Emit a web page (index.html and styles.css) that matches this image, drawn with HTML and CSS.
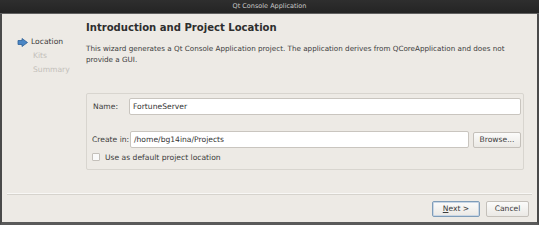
FILE: index.html
```html
<!DOCTYPE html>
<html>
<head>
<meta charset="utf-8">
<link rel="stylesheet" href="styles.css">
</head>
<body>
<div class="window">
  <div class="titlebar">Qt Console Application</div>
  <div class="client">
    <div class="main">
      <div class="sidebar">
        <div class="step current">
          <svg class="arrow" width="11" height="9" viewBox="0 0 11 9"><path d="M1 2.5 H5 V0.5 L10.5 4.5 L5 8.5 V6.5 H1 Z" fill="#4a86c5" stroke="#2d5f97" stroke-width="0.8" stroke-linejoin="round"/></svg>
          <span>Location</span>
        </div>
        <div class="step">Kits</div>
        <div class="step">Summary</div>
      </div>
      <div class="content">
        <h1 class="heading">Introduction and Project Location</h1>
        <p class="desc">This wizard generates a Qt Console Application project. The application derives from QCoreApplication and does not<br>provide a GUI.</p>
        <div class="group">
          <div class="row">
            <label class="lbl lbl-name">Name:</label>
            <div class="input">FortuneServer</div>
          </div>
          <div class="row row-create">
            <label class="lbl">Create in:</label>
            <div class="input">/home/bg14ina/Projects</div>
            <div class="btn browse">Browse...</div>
          </div>
          <div class="check-row">
            <span class="checkbox"></span>
            <span>Use as default project location</span>
          </div>
        </div>
      </div>
    </div>
    <div class="footer">
      <div class="btn next"><span class="u">N</span>ext &gt;</div>
      <div class="btn cancel">Cancel</div>
    </div>
  </div>
</div>
</body>
</html>
```
FILE: styles.css
```css
html, body {
  margin: 0;
  padding: 0;
  background: #3a3a3a;
}
body {
  width: 539px;
  height: 225px;
  overflow: hidden;
  font-family: "DejaVu Sans", sans-serif;
  font-size: 7.6px;
  color: #3c3c3c;
}
.window {
  width: 539px;
  height: 225px;
  display: flex;
  flex-direction: column;
  box-sizing: border-box;
  border-left: 2px solid #4a4a4a;
  border-right: 2px solid #4a4a4a;
  border-bottom: 3px solid #5a5a5a;
}
.titlebar {
  height: 13px;
  line-height: 13px;
  background: linear-gradient(#2e2e2e, #242424);
  border-bottom: 1px solid #606060;
  color: #c8c8c8;
  font-size: 6.5px;
  text-align: center;
  margin: 0 -2px;
}
.client {
  flex: 1;
  background: #edeae5;
  display: flex;
  flex-direction: column;
}
.main {
  display: flex;
  flex: 1;
}
.sidebar {
  width: 84px;
  padding: 21px 0 0 14px;
  box-sizing: border-box;
}
.step {
  height: 14px;
  line-height: 14px;
  color: #c3c0ba;
  padding-left: 17px;
}
.step.current {
  color: #3c3c3c;
  padding-left: 0;
  display: flex;
  align-items: center;
  gap: 3px;
}
.arrow { display: block; margin-left: 1px; }
.content {
  flex: 1;
  padding-right: 13px;
}
.heading {
  margin: 4px 0 0;
  font-family: "DejaVu Sans Condensed", "DejaVu Sans", sans-serif;
  font-size: 11.2px;
  font-weight: bold;
  color: #2e2e2e;
  height: 20px;
  line-height: 20px;
}
.desc {
  margin: 5px 0 0;
  line-height: 11px;
  font-size: 7.2px;
  white-space: nowrap;
}
.group {
  margin-top: 28px;
  border: 1px solid #d8d5cf;
  border-radius: 2px;
  height: 77px;
  box-sizing: border-box;
  padding: 4px 2px 0 5px;
}
.row {
  display: flex;
  align-items: center;
  height: 17px;
}
.row-create { margin-top: 16px; }
.lbl { width: 38px; }
.lbl-name { width: 36px; padding-left: 1px; }
.input {
  flex: 1;
  height: 17px;
  box-sizing: border-box;
  border: 1px solid #c9c5bf;
  border-radius: 2px;
  background: #ffffff;
  padding-left: 3px;
  line-height: 15px;
  color: #333;
}
.btn {
  height: 16px;
  box-sizing: border-box;
  border: 1px solid #c4c0ba;
  border-radius: 2px;
  background: linear-gradient(#fbfbfa, #ebe9e5);
  line-height: 14px;
  text-align: center;
  color: #3c3c3c;
}
.browse { width: 48px; margin-left: 4px; }
.check-row {
  display: flex;
  align-items: center;
  gap: 5px;
  margin-top: 4px;
  height: 10px;
}
.checkbox {
  width: 8px;
  height: 8px;
  box-sizing: border-box;
  border: 1px solid #c4c0ba;
  background: #fafafa;
  border-radius: 1px;
}
.footer {
  border-top: 1px solid #d6d3cd;
  box-shadow: 0 -1px 0 #f8f7f5;
  margin: 0 5px;
  height: 27px;
  display: flex;
  justify-content: flex-end;
  align-items: center;
  gap: 6px;
  padding-right: 3px;
}
.next {
  width: 48px;
  border-color: #7f9db9;
  box-shadow: inset 0 0 0 1px #c9d6e5;
}
.cancel { width: 43px; }
.u { text-decoration: underline; }
```
